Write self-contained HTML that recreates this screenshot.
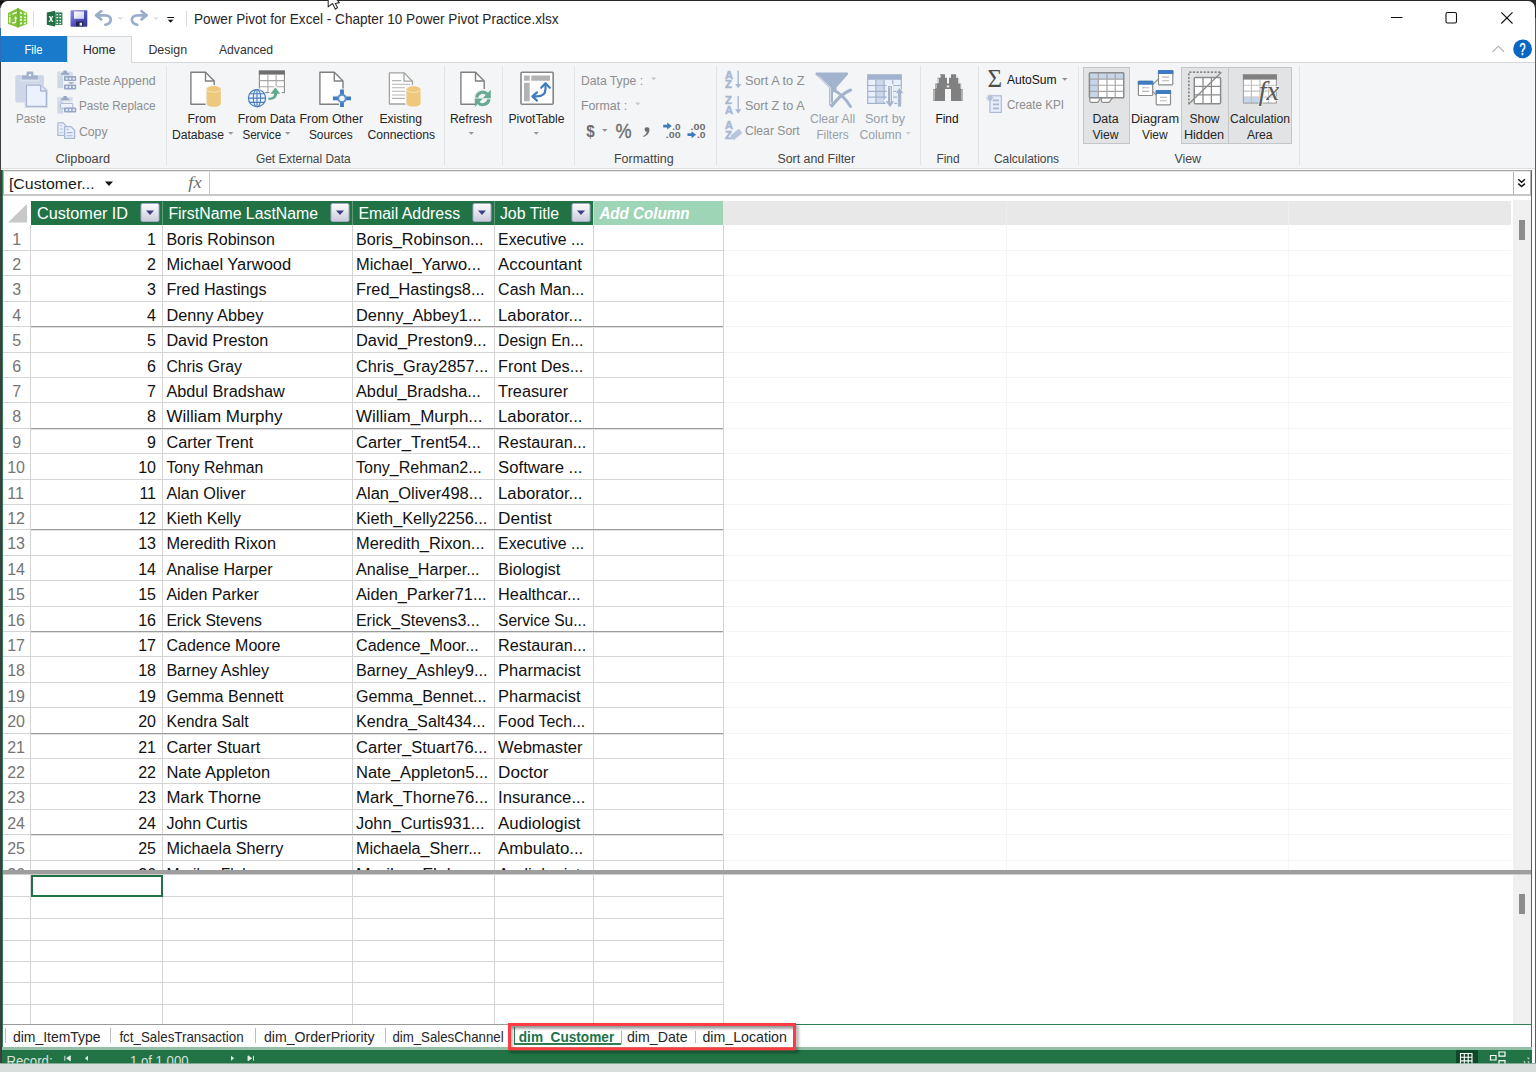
<!DOCTYPE html>
<html lang="en"><head><meta charset="utf-8"><title>Power Pivot for Excel - Chapter 10 Power Pivot Practice.xlsx</title>
<style>
html,body{margin:0;padding:0;background:#fff;}
body{width:1536px;height:1072px;overflow:hidden;position:relative;font-family:"Liberation Sans", sans-serif;}
#win{position:absolute;left:0;top:0;width:1536px;height:1072px;overflow:hidden;}
#win>div{position:absolute;box-sizing:border-box;}
svg#ov{position:absolute;left:0;top:0;}
svg text{font-family:"Liberation Sans", sans-serif;white-space:pre;}
</style></head><body>
<div id="win">
<div style="left:0px;top:0px;width:1536px;height:1072px;background:#26282c;"></div>
<div style="left:0px;top:1px;width:9px;height:9px;background:linear-gradient(135deg,#0c0c0c 0%,#161616 22%,#aab2be 55%,#c5cbd6 100%);"></div>
<div style="left:1px;top:1px;width:1534px;height:1063px;background:#ffffff;border-radius:7px 7px 0 0;"></div>
<div style="left:0px;top:1064px;width:1536px;height:8px;background:#d7dedb;"></div>
<div style="left:1px;top:36px;width:66px;height:26px;background:#1979ca;"></div>
<div style="left:67px;top:36px;width:65px;height:27px;background:#f3f5f7;border:1px solid #d5d7da;border-bottom:none;"></div>
<div style="left:132px;top:62px;width:1403px;height:1px;background:#d5d7da;"></div>
<div style="left:1px;top:63px;width:1534px;height:105px;background:#f3f5f7;"></div>
<div style="left:1px;top:168px;width:1534px;height:1px;background:#dcdee0;"></div>
<div style="left:1px;top:169px;width:1534px;height:2px;background:#ffffff;"></div>
<div style="left:33px;top:11px;width:1px;height:15px;background:#dadada;"></div>
<div style="left:186px;top:11px;width:1px;height:15px;background:#dadada;"></div>
<div style="left:166px;top:66px;width:1px;height:99px;background:#e1e3e5;"></div>
<div style="left:444px;top:66px;width:1px;height:99px;background:#e1e3e5;"></div>
<div style="left:502px;top:66px;width:1px;height:99px;background:#e1e3e5;"></div>
<div style="left:574px;top:66px;width:1px;height:99px;background:#e1e3e5;"></div>
<div style="left:716px;top:66px;width:1px;height:99px;background:#e1e3e5;"></div>
<div style="left:920px;top:66px;width:1px;height:99px;background:#e1e3e5;"></div>
<div style="left:978px;top:66px;width:1px;height:99px;background:#e1e3e5;"></div>
<div style="left:1078px;top:66px;width:1px;height:99px;background:#e1e3e5;"></div>
<div style="left:1299px;top:66px;width:1px;height:99px;background:#e1e3e5;"></div>
<div style="left:1083px;top:67px;width:47px;height:77px;background:#e1e3e4;border:1px solid #c3c5c7;"></div>
<div style="left:1181px;top:67px;width:48px;height:77px;background:#e1e3e4;border:1px solid #c3c5c7;"></div>
<div style="left:1228px;top:67px;width:64px;height:77px;background:#e1e3e4;border:1px solid #c3c5c7;"></div>
<div style="left:3px;top:170px;width:1528px;height:26px;background:#ffffff;border:1px solid #b4b4b4;border-top-color:#a6a6a6;border-bottom:2px solid #c8c8c8;"></div>
<div style="left:4px;top:171px;width:1526px;height:1px;background:#e4e4e4;"></div>
<div style="left:209px;top:172px;width:1px;height:23px;background:#c8c8c8;"></div>
<div style="left:1513px;top:172px;width:1px;height:23px;background:#b5b5b5;"></div>
<div style="left:0px;top:8px;width:1px;height:20px;background:#c5cbd6;"></div>
<div style="left:0px;top:28px;width:1px;height:34px;background:#2b6cb8;"></div>
<div style="left:0px;top:62px;width:1px;height:1001px;background:#3f3f3f;"></div>
<div style="left:1px;top:170px;width:1px;height:893px;background:#3a3a3a;"></div>
<div style="left:2px;top:170px;width:1px;height:880px;background:#2e7d53;"></div>
<div style="left:1531px;top:170px;width:1px;height:893px;background:#2e7d53;"></div>
<div style="left:1535px;top:18px;width:1px;height:1045px;background:#5c5c5c;"></div>
<div style="left:3px;top:201px;width:27px;height:24px;background:#ffffff;"></div>
<div style="left:31px;top:201px;width:562px;height:24px;background:#217346;"></div>
<div style="left:593px;top:201px;width:130px;height:24px;background:#9fd5b7;"></div>
<div style="left:723px;top:201px;width:788px;height:24px;background:#e8e8e8;"></div>
<div style="left:162px;top:201px;width:1px;height:24px;background:#5e9b78;"></div>
<div style="left:352px;top:201px;width:1px;height:24px;background:#5e9b78;"></div>
<div style="left:494px;top:201px;width:1px;height:24px;background:#5e9b78;"></div>
<div style="left:593px;top:201px;width:1px;height:24px;background:#bfe3cf;"></div>
<div style="left:1006px;top:201px;width:1px;height:24px;background:#eeeeee;"></div>
<div style="left:1288px;top:201px;width:1px;height:24px;background:#eeeeee;"></div>
<div style="left:30px;top:225px;width:1px;height:645px;background:#d4d4d4;"></div>
<div style="left:162px;top:225px;width:1px;height:645px;background:#d4d4d4;"></div>
<div style="left:352px;top:225px;width:1px;height:645px;background:#d4d4d4;"></div>
<div style="left:494px;top:225px;width:1px;height:645px;background:#d4d4d4;"></div>
<div style="left:593px;top:225px;width:1px;height:645px;background:#d4d4d4;"></div>
<div style="left:723px;top:225px;width:1px;height:645px;background:#d4d4d4;"></div>
<div style="left:1006px;top:225px;width:1px;height:645px;background:#f5f5f5;"></div>
<div style="left:1288px;top:225px;width:1px;height:645px;background:#f5f5f5;"></div>
<div style="left:3px;top:250px;width:720px;height:1px;background:#d4d4d4;"></div>
<div style="left:724px;top:250px;width:787px;height:1px;background:#f4f4f4;"></div>
<div style="left:3px;top:275px;width:720px;height:1px;background:#d4d4d4;"></div>
<div style="left:724px;top:275px;width:787px;height:1px;background:#f4f4f4;"></div>
<div style="left:3px;top:301px;width:720px;height:1px;background:#d4d4d4;"></div>
<div style="left:724px;top:301px;width:787px;height:1px;background:#f4f4f4;"></div>
<div style="left:3px;top:326px;width:720px;height:1px;background:#d4d4d4;"></div>
<div style="left:724px;top:326px;width:787px;height:1px;background:#f4f4f4;"></div>
<div style="left:31px;top:326px;width:692px;height:1px;background:#9c9c9c;"></div>
<div style="left:31px;top:327px;width:692px;height:1px;background:#e0e0e0;"></div>
<div style="left:3px;top:352px;width:720px;height:1px;background:#d4d4d4;"></div>
<div style="left:724px;top:352px;width:787px;height:1px;background:#f4f4f4;"></div>
<div style="left:3px;top:377px;width:720px;height:1px;background:#d4d4d4;"></div>
<div style="left:724px;top:377px;width:787px;height:1px;background:#f4f4f4;"></div>
<div style="left:3px;top:402px;width:720px;height:1px;background:#d4d4d4;"></div>
<div style="left:724px;top:402px;width:787px;height:1px;background:#f4f4f4;"></div>
<div style="left:3px;top:428px;width:720px;height:1px;background:#d4d4d4;"></div>
<div style="left:724px;top:428px;width:787px;height:1px;background:#f4f4f4;"></div>
<div style="left:31px;top:428px;width:692px;height:1px;background:#9c9c9c;"></div>
<div style="left:31px;top:429px;width:692px;height:1px;background:#e0e0e0;"></div>
<div style="left:3px;top:453px;width:720px;height:1px;background:#d4d4d4;"></div>
<div style="left:724px;top:453px;width:787px;height:1px;background:#f4f4f4;"></div>
<div style="left:3px;top:479px;width:720px;height:1px;background:#d4d4d4;"></div>
<div style="left:724px;top:479px;width:787px;height:1px;background:#f4f4f4;"></div>
<div style="left:3px;top:504px;width:720px;height:1px;background:#d4d4d4;"></div>
<div style="left:724px;top:504px;width:787px;height:1px;background:#f4f4f4;"></div>
<div style="left:3px;top:529px;width:720px;height:1px;background:#d4d4d4;"></div>
<div style="left:724px;top:529px;width:787px;height:1px;background:#f4f4f4;"></div>
<div style="left:31px;top:529px;width:692px;height:1px;background:#9c9c9c;"></div>
<div style="left:31px;top:530px;width:692px;height:1px;background:#e0e0e0;"></div>
<div style="left:3px;top:555px;width:720px;height:1px;background:#d4d4d4;"></div>
<div style="left:724px;top:555px;width:787px;height:1px;background:#f4f4f4;"></div>
<div style="left:3px;top:580px;width:720px;height:1px;background:#d4d4d4;"></div>
<div style="left:724px;top:580px;width:787px;height:1px;background:#f4f4f4;"></div>
<div style="left:3px;top:606px;width:720px;height:1px;background:#d4d4d4;"></div>
<div style="left:724px;top:606px;width:787px;height:1px;background:#f4f4f4;"></div>
<div style="left:3px;top:631px;width:720px;height:1px;background:#d4d4d4;"></div>
<div style="left:724px;top:631px;width:787px;height:1px;background:#f4f4f4;"></div>
<div style="left:31px;top:631px;width:692px;height:1px;background:#9c9c9c;"></div>
<div style="left:31px;top:632px;width:692px;height:1px;background:#e0e0e0;"></div>
<div style="left:3px;top:656px;width:720px;height:1px;background:#d4d4d4;"></div>
<div style="left:724px;top:656px;width:787px;height:1px;background:#f4f4f4;"></div>
<div style="left:3px;top:682px;width:720px;height:1px;background:#d4d4d4;"></div>
<div style="left:724px;top:682px;width:787px;height:1px;background:#f4f4f4;"></div>
<div style="left:3px;top:707px;width:720px;height:1px;background:#d4d4d4;"></div>
<div style="left:724px;top:707px;width:787px;height:1px;background:#f4f4f4;"></div>
<div style="left:3px;top:733px;width:720px;height:1px;background:#d4d4d4;"></div>
<div style="left:724px;top:733px;width:787px;height:1px;background:#f4f4f4;"></div>
<div style="left:31px;top:733px;width:692px;height:1px;background:#9c9c9c;"></div>
<div style="left:31px;top:734px;width:692px;height:1px;background:#e0e0e0;"></div>
<div style="left:3px;top:758px;width:720px;height:1px;background:#d4d4d4;"></div>
<div style="left:724px;top:758px;width:787px;height:1px;background:#f4f4f4;"></div>
<div style="left:3px;top:783px;width:720px;height:1px;background:#d4d4d4;"></div>
<div style="left:724px;top:783px;width:787px;height:1px;background:#f4f4f4;"></div>
<div style="left:3px;top:809px;width:720px;height:1px;background:#d4d4d4;"></div>
<div style="left:724px;top:809px;width:787px;height:1px;background:#f4f4f4;"></div>
<div style="left:3px;top:834px;width:720px;height:1px;background:#d4d4d4;"></div>
<div style="left:724px;top:834px;width:787px;height:1px;background:#f4f4f4;"></div>
<div style="left:31px;top:834px;width:692px;height:1px;background:#9c9c9c;"></div>
<div style="left:31px;top:835px;width:692px;height:1px;background:#e0e0e0;"></div>
<div style="left:3px;top:860px;width:720px;height:1px;background:#d4d4d4;"></div>
<div style="left:724px;top:860px;width:787px;height:1px;background:#f4f4f4;"></div>
<div style="left:1513px;top:200px;width:18px;height:670px;background:#f0f0f0;"></div>
<div style="left:1519px;top:220px;width:6px;height:20px;background:#8c8c8c;"></div>
<div style="left:3px;top:870px;width:1528px;height:4px;background:#9e9e9e;"></div>
<div style="left:3px;top:874px;width:1528px;height:1px;background:#cfcfcf;"></div>
<div style="left:30px;top:875px;width:1px;height:149px;background:#d4d4d4;"></div>
<div style="left:162px;top:875px;width:1px;height:149px;background:#d4d4d4;"></div>
<div style="left:352px;top:875px;width:1px;height:149px;background:#d4d4d4;"></div>
<div style="left:494px;top:875px;width:1px;height:149px;background:#d4d4d4;"></div>
<div style="left:593px;top:875px;width:1px;height:149px;background:#d4d4d4;"></div>
<div style="left:723px;top:875px;width:1px;height:149px;background:#d4d4d4;"></div>
<div style="left:3px;top:896px;width:720px;height:1px;background:#d4d4d4;"></div>
<div style="left:3px;top:918px;width:720px;height:1px;background:#d4d4d4;"></div>
<div style="left:3px;top:940px;width:720px;height:1px;background:#d4d4d4;"></div>
<div style="left:3px;top:961px;width:720px;height:1px;background:#d4d4d4;"></div>
<div style="left:3px;top:982px;width:720px;height:1px;background:#d4d4d4;"></div>
<div style="left:3px;top:1004px;width:720px;height:1px;background:#d4d4d4;"></div>
<div style="left:31px;top:875px;width:132px;height:22px;border:2px solid #217346;"></div>
<div style="left:1513px;top:875px;width:18px;height:149px;background:#f0f0f0;"></div>
<div style="left:1519px;top:894px;width:6px;height:20px;background:#8c8c8c;"></div>
<div style="left:3px;top:1024px;width:1528px;height:1px;background:#9a9a9a;"></div>
<div style="left:796px;top:1024px;width:735px;height:1px;background:#2e7d53;"></div>
<div style="left:5px;top:1028px;width:1px;height:15px;background:#bdbdbd;"></div>
<div style="left:110px;top:1028px;width:1px;height:15px;background:#bdbdbd;"></div>
<div style="left:255px;top:1028px;width:1px;height:15px;background:#bdbdbd;"></div>
<div style="left:385px;top:1028px;width:1px;height:15px;background:#bdbdbd;"></div>
<div style="left:695px;top:1028px;width:1px;height:15px;background:#bdbdbd;"></div>
<div style="left:621px;top:1027px;width:1px;height:17px;background:#a9b8b0;"></div>
<div style="left:511px;top:1026px;width:282px;height:5px;background:linear-gradient(#c9c9c9,#ffffff);"></div>
<div style="left:514px;top:1027px;width:1px;height:17px;background:#2e7d53;"></div>
<div style="left:514px;top:1043px;width:107px;height:1.5px;background:#2e7d53;"></div>
<div style="left:2px;top:1047px;width:1530px;height:3px;background:#93bfa7;"></div>
<div style="left:2px;top:1050px;width:1530px;height:13px;background:#217346;"></div>
<div style="left:0px;top:1063px;width:1536px;height:1px;background:#8fb49f;"></div>
<div style="left:2px;top:1063px;width:1530px;height:1px;background:#7fab93;"></div>
<div style="left:1456px;top:1050px;width:22px;height:13px;background:#0d4926;"></div>
<svg id="ov" width="1536" height="1072" viewBox="0 0 1536 1072">
<text x="193.90" y="23.60" font-size="14" fill="#262626" textLength="364.70" lengthAdjust="spacingAndGlyphs">Power Pivot for Excel - Chapter 10 Power Pivot Practice.xlsx</text>
<text x="24.40" y="53.60" font-size="13" fill="#ffffff" textLength="18.20" lengthAdjust="spacingAndGlyphs">File</text>
<text x="82.90" y="53.60" font-size="13" fill="#262626" textLength="32.70" lengthAdjust="spacingAndGlyphs">Home</text>
<text x="148.40" y="53.60" font-size="13" fill="#333333" textLength="38.70" lengthAdjust="spacingAndGlyphs">Design</text>
<text x="218.90" y="53.60" font-size="13" fill="#333333" textLength="54.20" lengthAdjust="spacingAndGlyphs">Advanced</text>
<text x="55.40" y="163.00" font-size="12.5" fill="#444444" textLength="54.70" lengthAdjust="spacingAndGlyphs">Clipboard</text>
<text x="255.90" y="163.00" font-size="12.5" fill="#444444" textLength="94.70" lengthAdjust="spacingAndGlyphs">Get External Data</text>
<text x="613.90" y="163.00" font-size="12.5" fill="#444444" textLength="59.70" lengthAdjust="spacingAndGlyphs">Formatting</text>
<text x="777.40" y="163.00" font-size="12.5" fill="#444444" textLength="77.70" lengthAdjust="spacingAndGlyphs">Sort and Filter</text>
<text x="936.40" y="163.00" font-size="12.5" fill="#444444" textLength="23.20" lengthAdjust="spacingAndGlyphs">Find</text>
<text x="993.90" y="163.00" font-size="12.5" fill="#444444" textLength="65.20" lengthAdjust="spacingAndGlyphs">Calculations</text>
<text x="1174.40" y="163.00" font-size="12.5" fill="#444444" textLength="26.70" lengthAdjust="spacingAndGlyphs">View</text>
<text x="15.90" y="123.20" font-size="12.5" fill="#8e8e8e" textLength="29.70" lengthAdjust="spacingAndGlyphs">Paste</text>
<text x="78.90" y="85.00" font-size="12.5" fill="#8e8e8e" textLength="76.70" lengthAdjust="spacingAndGlyphs">Paste Append</text>
<text x="78.90" y="110.00" font-size="12.5" fill="#8e8e8e" textLength="76.70" lengthAdjust="spacingAndGlyphs">Paste Replace</text>
<text x="78.90" y="135.60" font-size="12.5" fill="#8e8e8e" textLength="28.70" lengthAdjust="spacingAndGlyphs">Copy</text>
<text x="187.40" y="123.20" font-size="12.5" fill="#262626" textLength="28.70" lengthAdjust="spacingAndGlyphs">From</text>
<text x="171.90" y="139.00" font-size="12.5" fill="#262626" textLength="52.00" lengthAdjust="spacingAndGlyphs">Database</text>
<text x="237.70" y="123.20" font-size="12.5" fill="#262626" textLength="57.90" lengthAdjust="spacingAndGlyphs">From Data</text>
<text x="242.40" y="139.00" font-size="12.5" fill="#262626" textLength="38.70" lengthAdjust="spacingAndGlyphs">Service</text>
<text x="299.40" y="123.20" font-size="12.5" fill="#262626" textLength="63.70" lengthAdjust="spacingAndGlyphs">From Other</text>
<text x="308.90" y="139.00" font-size="12.5" fill="#262626" textLength="43.70" lengthAdjust="spacingAndGlyphs">Sources</text>
<text x="379.40" y="123.20" font-size="12.5" fill="#262626" textLength="42.50" lengthAdjust="spacingAndGlyphs">Existing</text>
<text x="367.40" y="139.00" font-size="12.5" fill="#262626" textLength="67.70" lengthAdjust="spacingAndGlyphs">Connections</text>
<text x="449.90" y="123.20" font-size="12.5" fill="#262626" textLength="42.20" lengthAdjust="spacingAndGlyphs">Refresh</text>
<text x="508.40" y="123.20" font-size="12.5" fill="#262626" textLength="56.20" lengthAdjust="spacingAndGlyphs">PivotTable</text>
<text x="580.90" y="85.00" font-size="12.5" fill="#8e8e8e" textLength="62.20" lengthAdjust="spacingAndGlyphs">Data Type :</text>
<text x="580.90" y="110.00" font-size="12.5" fill="#8e8e8e" textLength="46.20" lengthAdjust="spacingAndGlyphs">Format :</text>
<text x="744.90" y="85.00" font-size="12.5" fill="#8e8e8e" textLength="59.70" lengthAdjust="spacingAndGlyphs">Sort A to Z</text>
<text x="744.90" y="110.00" font-size="12.5" fill="#8e8e8e" textLength="59.70" lengthAdjust="spacingAndGlyphs">Sort Z to A</text>
<text x="744.90" y="135.30" font-size="12.5" fill="#8e8e8e" textLength="54.70" lengthAdjust="spacingAndGlyphs">Clear Sort</text>
<text x="809.90" y="123.20" font-size="12.5" fill="#9aa0a8" textLength="45.20" lengthAdjust="spacingAndGlyphs">Clear All</text>
<text x="816.40" y="139.00" font-size="12.5" fill="#9aa0a8" textLength="32.20" lengthAdjust="spacingAndGlyphs">Filters</text>
<text x="864.90" y="123.20" font-size="12.5" fill="#9aa0a8" textLength="40.20" lengthAdjust="spacingAndGlyphs">Sort by</text>
<text x="859.40" y="139.00" font-size="12.5" fill="#9aa0a8" textLength="42.20" lengthAdjust="spacingAndGlyphs">Column</text>
<text x="935.40" y="123.20" font-size="12.5" fill="#111111" textLength="23.20" lengthAdjust="spacingAndGlyphs">Find</text>
<text x="1006.90" y="84.00" font-size="12.5" fill="#111111" textLength="49.70" lengthAdjust="spacingAndGlyphs">AutoSum</text>
<text x="1006.90" y="108.50" font-size="12.5" fill="#8e8e8e" textLength="57.20" lengthAdjust="spacingAndGlyphs">Create KPI</text>
<text x="1092.40" y="123.20" font-size="12.5" fill="#262626" textLength="26.20" lengthAdjust="spacingAndGlyphs">Data</text>
<text x="1092.40" y="139.00" font-size="12.5" fill="#262626" textLength="26.20" lengthAdjust="spacingAndGlyphs">View</text>
<text x="1130.90" y="123.20" font-size="12.5" fill="#262626" textLength="48.20" lengthAdjust="spacingAndGlyphs">Diagram</text>
<text x="1141.90" y="139.00" font-size="12.5" fill="#262626" textLength="25.70" lengthAdjust="spacingAndGlyphs">View</text>
<text x="1189.40" y="123.20" font-size="12.5" fill="#262626" textLength="30.20" lengthAdjust="spacingAndGlyphs">Show</text>
<text x="1183.90" y="139.00" font-size="12.5" fill="#262626" textLength="40.20" lengthAdjust="spacingAndGlyphs">Hidden</text>
<text x="1229.90" y="123.20" font-size="12.5" fill="#262626" textLength="60.20" lengthAdjust="spacingAndGlyphs">Calculation</text>
<text x="1246.90" y="139.00" font-size="12.5" fill="#262626" textLength="25.70" lengthAdjust="spacingAndGlyphs">Area</text>
<path d="M228 132h5.5l-2.75 2.8z" fill="#9a9a9a"/>
<path d="M285 132h5.5l-2.75 2.8z" fill="#9a9a9a"/>
<path d="M468.5 132h5.5l-2.75 2.8z" fill="#9a9a9a"/>
<path d="M533.5 132h5.5l-2.75 2.8z" fill="#9a9a9a"/>
<path d="M651 77.5h5.5l-2.75 2.8z" fill="#c8c8c8"/>
<path d="M635 102.5h5.5l-2.75 2.8z" fill="#c8c8c8"/>
<path d="M602 129h5.5l-2.75 2.8z" fill="#8e8e8e"/>
<path d="M905.5 132h5.5l-2.75 2.8z" fill="#cfcfcf"/>
<path d="M1062 78h5.5l-2.75 2.8z" fill="#8e8e8e"/>
<path d="M1391 17.5h11.5" stroke="#111" stroke-width="1" fill="none"/>
<rect x="1446" y="12.5" width="10.5" height="10.5" rx="1.5" fill="none" stroke="#111" stroke-width="1.1"/>
<path d="M1501.3 12.3l11.2 11.2M1512.5 12.3l-11.2 11.2" stroke="#111" stroke-width="1.1" fill="none"/>
<path d="M1492.5 51.8l5.8-5.6 5.8 5.6" stroke="#a8a8a8" stroke-width="1.1" fill="none"/>
<circle cx="1522.6" cy="48.9" r="9.4" fill="#0a66c2"/>
<text x="1519.60" y="54.60" font-size="16.5" fill="#ffffff" textLength="6.00" lengthAdjust="spacingAndGlyphs" stroke="#fff" stroke-width="0.5">?</text>
<text x="8.90" y="188.90" font-size="15" fill="#1a1a1a" textLength="85.70" lengthAdjust="spacingAndGlyphs">[Customer...</text>
<path d="M105 181.5h8l-4 4.5z" fill="#111"/>
<text x="188.3" y="187.6" style="font-family:'Liberation Serif',serif" font-style="italic" font-size="17" fill="#707070" textLength="13.4" lengthAdjust="spacingAndGlyphs">fx</text>
<path d="M1518.3 179.3l3.3 3 3.3-3M1518.3 183.6l3.3 3 3.3-3" stroke="#111" stroke-width="1.5" fill="none"/>
<path d="M8 222.5L27 204V222.5z" fill="#c8c8c8"/>
<text x="36.90" y="218.80" font-size="16" fill="#ffffff" textLength="91.20" lengthAdjust="spacingAndGlyphs">Customer ID</text>
<text x="168.40" y="218.80" font-size="16" fill="#ffffff" textLength="149.70" lengthAdjust="spacingAndGlyphs">FirstName LastName</text>
<text x="358.40" y="218.80" font-size="16" fill="#ffffff" textLength="101.70" lengthAdjust="spacingAndGlyphs">Email Address</text>
<text x="499.90" y="218.80" font-size="16" fill="#ffffff" textLength="59.20" lengthAdjust="spacingAndGlyphs">Job Title</text>
<text x="599.40" y="218.80" font-size="16" fill="#ffffff" font-weight="bold" font-style="italic" textLength="90.20" lengthAdjust="spacingAndGlyphs">Add Column</text>
<defs><linearGradient id="fb" x1="0" y1="0" x2="0" y2="1"><stop offset="0" stop-color="#fdfdfd"/><stop offset="1" stop-color="#cbcbda"/></linearGradient></defs>
<rect x="141" y="203.5" width="18" height="18" rx="1.5" fill="url(#fb)" stroke="#a4a8c8" stroke-width="1"/>
<path d="M146 210.5h8l-4 4.5z" fill="#3a3f86"/>
<rect x="331" y="203.5" width="18" height="18" rx="1.5" fill="url(#fb)" stroke="#a4a8c8" stroke-width="1"/>
<path d="M336 210.5h8l-4 4.5z" fill="#3a3f86"/>
<rect x="473" y="203.5" width="18" height="18" rx="1.5" fill="url(#fb)" stroke="#a4a8c8" stroke-width="1"/>
<path d="M478 210.5h8l-4 4.5z" fill="#3a3f86"/>
<rect x="572" y="203.5" width="18" height="18" rx="1.5" fill="url(#fb)" stroke="#a4a8c8" stroke-width="1"/>
<path d="M577 210.5h8l-4 4.5z" fill="#3a3f86"/>
<clipPath id="gc"><rect x="0" y="200" width="1536" height="670"/></clipPath>
<g clip-path="url(#gc)">
<text x="12.2" y="245.1" font-size="16" fill="#757575">1</text>
<text x="156" y="245.1" font-size="16" fill="#111" text-anchor="end">1</text>
<text x="166.40" y="245.10" font-size="16" fill="#111" textLength="108.40" lengthAdjust="spacingAndGlyphs">Boris Robinson</text>
<text x="356.00" y="245.10" font-size="16" fill="#111" textLength="127.60" lengthAdjust="spacingAndGlyphs">Boris_Robinson...</text>
<text x="498.10" y="245.10" font-size="16" fill="#111" textLength="86.10" lengthAdjust="spacingAndGlyphs">Executive ...</text>
<text x="12.2" y="270.1" font-size="16" fill="#757575">2</text>
<text x="156" y="270.1" font-size="16" fill="#111" text-anchor="end">2</text>
<text x="166.40" y="270.10" font-size="16" fill="#111" textLength="124.70" lengthAdjust="spacingAndGlyphs">Michael Yarwood</text>
<text x="356.00" y="270.10" font-size="16" fill="#111" textLength="124.80" lengthAdjust="spacingAndGlyphs">Michael_Yarwo...</text>
<text x="498.10" y="270.10" font-size="16" fill="#111" textLength="83.80" lengthAdjust="spacingAndGlyphs">Accountant</text>
<text x="12.2" y="295.1" font-size="16" fill="#757575">3</text>
<text x="156" y="295.1" font-size="16" fill="#111" text-anchor="end">3</text>
<text x="166.40" y="295.10" font-size="16" fill="#111" textLength="100.10" lengthAdjust="spacingAndGlyphs">Fred Hastings</text>
<text x="356.00" y="295.10" font-size="16" fill="#111" textLength="128.50" lengthAdjust="spacingAndGlyphs">Fred_Hastings8...</text>
<text x="498.10" y="295.10" font-size="16" fill="#111" textLength="86.10" lengthAdjust="spacingAndGlyphs">Cash Man...</text>
<text x="12.2" y="321.1" font-size="16" fill="#757575">4</text>
<text x="156" y="321.1" font-size="16" fill="#111" text-anchor="end">4</text>
<text x="166.40" y="321.10" font-size="16" fill="#111" textLength="96.90" lengthAdjust="spacingAndGlyphs">Denny Abbey</text>
<text x="356.00" y="321.10" font-size="16" fill="#111" textLength="125.60" lengthAdjust="spacingAndGlyphs">Denny_Abbey1...</text>
<text x="498.10" y="321.10" font-size="16" fill="#111" textLength="84.40" lengthAdjust="spacingAndGlyphs">Laborator...</text>
<text x="12.2" y="346.1" font-size="16" fill="#757575">5</text>
<text x="156" y="346.1" font-size="16" fill="#111" text-anchor="end">5</text>
<text x="166.40" y="346.10" font-size="16" fill="#111" textLength="101.80" lengthAdjust="spacingAndGlyphs">David Preston</text>
<text x="356.00" y="346.10" font-size="16" fill="#111" textLength="130.50" lengthAdjust="spacingAndGlyphs">David_Preston9...</text>
<text x="498.10" y="346.10" font-size="16" fill="#111" textLength="85.20" lengthAdjust="spacingAndGlyphs">Design En...</text>
<text x="12.2" y="372.1" font-size="16" fill="#757575">6</text>
<text x="156" y="372.1" font-size="16" fill="#111" text-anchor="end">6</text>
<text x="166.40" y="372.10" font-size="16" fill="#111" textLength="75.50" lengthAdjust="spacingAndGlyphs">Chris Gray</text>
<text x="356.00" y="372.10" font-size="16" fill="#111" textLength="132.20" lengthAdjust="spacingAndGlyphs">Chris_Gray2857...</text>
<text x="498.10" y="372.10" font-size="16" fill="#111" textLength="85.20" lengthAdjust="spacingAndGlyphs">Front Des...</text>
<text x="12.2" y="397.1" font-size="16" fill="#757575">7</text>
<text x="156" y="397.1" font-size="16" fill="#111" text-anchor="end">7</text>
<text x="166.40" y="397.10" font-size="16" fill="#111" textLength="118.40" lengthAdjust="spacingAndGlyphs">Abdul Bradshaw</text>
<text x="356.00" y="397.10" font-size="16" fill="#111" textLength="124.80" lengthAdjust="spacingAndGlyphs">Abdul_Bradsha...</text>
<text x="498.10" y="397.10" font-size="16" fill="#111" textLength="70.00" lengthAdjust="spacingAndGlyphs">Treasurer</text>
<text x="12.2" y="422.1" font-size="16" fill="#757575">8</text>
<text x="156" y="422.1" font-size="16" fill="#111" text-anchor="end">8</text>
<text x="166.40" y="422.10" font-size="16" fill="#111" textLength="116.10" lengthAdjust="spacingAndGlyphs">William Murphy</text>
<text x="356.00" y="422.10" font-size="16" fill="#111" textLength="126.50" lengthAdjust="spacingAndGlyphs">William_Murph...</text>
<text x="498.10" y="422.10" font-size="16" fill="#111" textLength="84.40" lengthAdjust="spacingAndGlyphs">Laborator...</text>
<text x="12.2" y="448.1" font-size="16" fill="#757575">9</text>
<text x="156" y="448.1" font-size="16" fill="#111" text-anchor="end">9</text>
<text x="166.40" y="448.10" font-size="16" fill="#111" textLength="86.90" lengthAdjust="spacingAndGlyphs">Carter Trent</text>
<text x="356.00" y="448.10" font-size="16" fill="#111" textLength="124.80" lengthAdjust="spacingAndGlyphs">Carter_Trent54...</text>
<text x="498.10" y="448.10" font-size="16" fill="#111" textLength="88.10" lengthAdjust="spacingAndGlyphs">Restauran...</text>
<text x="7.2" y="473.1" font-size="16" fill="#757575">10</text>
<text x="156" y="473.1" font-size="16" fill="#111" text-anchor="end">10</text>
<text x="166.40" y="473.10" font-size="16" fill="#111" textLength="96.90" lengthAdjust="spacingAndGlyphs">Tony Rehman</text>
<text x="356.00" y="473.10" font-size="16" fill="#111" textLength="125.60" lengthAdjust="spacingAndGlyphs">Tony_Rehman2...</text>
<text x="498.10" y="473.10" font-size="16" fill="#111" textLength="84.40" lengthAdjust="spacingAndGlyphs">Software ...</text>
<text x="7.2" y="499.1" font-size="16" fill="#757575">11</text>
<text x="156" y="499.1" font-size="16" fill="#111" text-anchor="end">11</text>
<text x="166.40" y="499.10" font-size="16" fill="#111" textLength="79.20" lengthAdjust="spacingAndGlyphs">Alan Oliver</text>
<text x="356.00" y="499.10" font-size="16" fill="#111" textLength="126.50" lengthAdjust="spacingAndGlyphs">Alan_Oliver498...</text>
<text x="498.10" y="499.10" font-size="16" fill="#111" textLength="84.40" lengthAdjust="spacingAndGlyphs">Laborator...</text>
<text x="7.2" y="524.1" font-size="16" fill="#757575">12</text>
<text x="156" y="524.1" font-size="16" fill="#111" text-anchor="end">12</text>
<text x="166.40" y="524.10" font-size="16" fill="#111" textLength="74.60" lengthAdjust="spacingAndGlyphs">Kieth Kelly</text>
<text x="356.00" y="524.10" font-size="16" fill="#111" textLength="131.40" lengthAdjust="spacingAndGlyphs">Kieth_Kelly2256...</text>
<text x="498.10" y="524.10" font-size="16" fill="#111" textLength="53.70" lengthAdjust="spacingAndGlyphs">Dentist</text>
<text x="7.2" y="549.1" font-size="16" fill="#757575">13</text>
<text x="156" y="549.1" font-size="16" fill="#111" text-anchor="end">13</text>
<text x="166.40" y="549.10" font-size="16" fill="#111" textLength="109.60" lengthAdjust="spacingAndGlyphs">Meredith Rixon</text>
<text x="356.00" y="549.10" font-size="16" fill="#111" textLength="128.50" lengthAdjust="spacingAndGlyphs">Meredith_Rixon...</text>
<text x="498.10" y="549.10" font-size="16" fill="#111" textLength="86.10" lengthAdjust="spacingAndGlyphs">Executive ...</text>
<text x="7.2" y="575.1" font-size="16" fill="#757575">14</text>
<text x="156" y="575.1" font-size="16" fill="#111" text-anchor="end">14</text>
<text x="166.40" y="575.10" font-size="16" fill="#111" textLength="106.10" lengthAdjust="spacingAndGlyphs">Analise Harper</text>
<text x="356.00" y="575.10" font-size="16" fill="#111" textLength="123.60" lengthAdjust="spacingAndGlyphs">Analise_Harper...</text>
<text x="498.10" y="575.10" font-size="16" fill="#111" textLength="62.30" lengthAdjust="spacingAndGlyphs">Biologist</text>
<text x="7.2" y="600.1" font-size="16" fill="#757575">15</text>
<text x="156" y="600.1" font-size="16" fill="#111" text-anchor="end">15</text>
<text x="166.40" y="600.10" font-size="16" fill="#111" textLength="92.40" lengthAdjust="spacingAndGlyphs">Aiden Parker</text>
<text x="356.00" y="600.10" font-size="16" fill="#111" textLength="130.50" lengthAdjust="spacingAndGlyphs">Aiden_Parker71...</text>
<text x="498.10" y="600.10" font-size="16" fill="#111" textLength="82.40" lengthAdjust="spacingAndGlyphs">Healthcar...</text>
<text x="7.2" y="626.1" font-size="16" fill="#757575">16</text>
<text x="156" y="626.1" font-size="16" fill="#111" text-anchor="end">16</text>
<text x="166.40" y="626.10" font-size="16" fill="#111" textLength="95.50" lengthAdjust="spacingAndGlyphs">Erick Stevens</text>
<text x="356.00" y="626.10" font-size="16" fill="#111" textLength="123.60" lengthAdjust="spacingAndGlyphs">Erick_Stevens3...</text>
<text x="498.10" y="626.10" font-size="16" fill="#111" textLength="88.10" lengthAdjust="spacingAndGlyphs">Service Su...</text>
<text x="7.2" y="651.1" font-size="16" fill="#757575">17</text>
<text x="156" y="651.1" font-size="16" fill="#111" text-anchor="end">17</text>
<text x="166.40" y="651.10" font-size="16" fill="#111" textLength="114.10" lengthAdjust="spacingAndGlyphs">Cadence Moore</text>
<text x="356.00" y="651.10" font-size="16" fill="#111" textLength="122.80" lengthAdjust="spacingAndGlyphs">Cadence_Moor...</text>
<text x="498.10" y="651.10" font-size="16" fill="#111" textLength="88.10" lengthAdjust="spacingAndGlyphs">Restauran...</text>
<text x="7.2" y="676.1" font-size="16" fill="#757575">18</text>
<text x="156" y="676.1" font-size="16" fill="#111" text-anchor="end">18</text>
<text x="166.40" y="676.10" font-size="16" fill="#111" textLength="102.70" lengthAdjust="spacingAndGlyphs">Barney Ashley</text>
<text x="356.00" y="676.10" font-size="16" fill="#111" textLength="131.40" lengthAdjust="spacingAndGlyphs">Barney_Ashley9...</text>
<text x="498.10" y="676.10" font-size="16" fill="#111" textLength="82.40" lengthAdjust="spacingAndGlyphs">Pharmacist</text>
<text x="7.2" y="702.1" font-size="16" fill="#757575">19</text>
<text x="156" y="702.1" font-size="16" fill="#111" text-anchor="end">19</text>
<text x="166.40" y="702.10" font-size="16" fill="#111" textLength="117.00" lengthAdjust="spacingAndGlyphs">Gemma Bennett</text>
<text x="356.00" y="702.10" font-size="16" fill="#111" textLength="130.50" lengthAdjust="spacingAndGlyphs">Gemma_Bennet...</text>
<text x="498.10" y="702.10" font-size="16" fill="#111" textLength="82.40" lengthAdjust="spacingAndGlyphs">Pharmacist</text>
<text x="7.2" y="727.1" font-size="16" fill="#757575">20</text>
<text x="156" y="727.1" font-size="16" fill="#111" text-anchor="end">20</text>
<text x="166.40" y="727.10" font-size="16" fill="#111" textLength="82.30" lengthAdjust="spacingAndGlyphs">Kendra Salt</text>
<text x="356.00" y="727.10" font-size="16" fill="#111" textLength="129.40" lengthAdjust="spacingAndGlyphs">Kendra_Salt434...</text>
<text x="498.10" y="727.10" font-size="16" fill="#111" textLength="87.20" lengthAdjust="spacingAndGlyphs">Food Tech...</text>
<text x="7.2" y="753.1" font-size="16" fill="#757575">21</text>
<text x="156" y="753.1" font-size="16" fill="#111" text-anchor="end">21</text>
<text x="166.40" y="753.10" font-size="16" fill="#111" textLength="93.80" lengthAdjust="spacingAndGlyphs">Carter Stuart</text>
<text x="356.00" y="753.10" font-size="16" fill="#111" textLength="131.40" lengthAdjust="spacingAndGlyphs">Carter_Stuart76...</text>
<text x="498.10" y="753.10" font-size="16" fill="#111" textLength="84.40" lengthAdjust="spacingAndGlyphs">Webmaster</text>
<text x="7.2" y="778.1" font-size="16" fill="#757575">22</text>
<text x="156" y="778.1" font-size="16" fill="#111" text-anchor="end">22</text>
<text x="166.40" y="778.10" font-size="16" fill="#111" textLength="103.80" lengthAdjust="spacingAndGlyphs">Nate Appleton</text>
<text x="356.00" y="778.10" font-size="16" fill="#111" textLength="132.20" lengthAdjust="spacingAndGlyphs">Nate_Appleton5...</text>
<text x="498.10" y="778.10" font-size="16" fill="#111" textLength="50.30" lengthAdjust="spacingAndGlyphs">Doctor</text>
<text x="7.2" y="803.1" font-size="16" fill="#757575">23</text>
<text x="156" y="803.1" font-size="16" fill="#111" text-anchor="end">23</text>
<text x="166.40" y="803.10" font-size="16" fill="#111" textLength="94.70" lengthAdjust="spacingAndGlyphs">Mark Thorne</text>
<text x="356.00" y="803.10" font-size="16" fill="#111" textLength="132.20" lengthAdjust="spacingAndGlyphs">Mark_Thorne76...</text>
<text x="498.10" y="803.10" font-size="16" fill="#111" textLength="87.20" lengthAdjust="spacingAndGlyphs">Insurance...</text>
<text x="7.2" y="829.1" font-size="16" fill="#757575">24</text>
<text x="156" y="829.1" font-size="16" fill="#111" text-anchor="end">24</text>
<text x="166.40" y="829.10" font-size="16" fill="#111" textLength="81.20" lengthAdjust="spacingAndGlyphs">John Curtis</text>
<text x="356.00" y="829.10" font-size="16" fill="#111" textLength="128.50" lengthAdjust="spacingAndGlyphs">John_Curtis931...</text>
<text x="498.10" y="829.10" font-size="16" fill="#111" textLength="82.40" lengthAdjust="spacingAndGlyphs">Audiologist</text>
<text x="7.2" y="854.1" font-size="16" fill="#757575">25</text>
<text x="156" y="854.1" font-size="16" fill="#111" text-anchor="end">25</text>
<text x="166.40" y="854.10" font-size="16" fill="#111" textLength="117.00" lengthAdjust="spacingAndGlyphs">Michaela Sherry</text>
<text x="356.00" y="854.10" font-size="16" fill="#111" textLength="125.60" lengthAdjust="spacingAndGlyphs">Michaela_Sherr...</text>
<text x="498.10" y="854.10" font-size="16" fill="#111" textLength="85.20" lengthAdjust="spacingAndGlyphs">Ambulato...</text>
<text x="7.2" y="880.1" font-size="16" fill="#757575">26</text>
<text x="156" y="880.1" font-size="16" fill="#111" text-anchor="end">26</text>
<text x="166.40" y="880.10" font-size="16" fill="#111" textLength="91.40" lengthAdjust="spacingAndGlyphs">Marilyn Flaks</text>
<text x="356.00" y="880.10" font-size="16" fill="#111" textLength="122.80" lengthAdjust="spacingAndGlyphs">Marilyn_Flaks...</text>
<text x="498.10" y="880.10" font-size="16" fill="#111" textLength="82.40" lengthAdjust="spacingAndGlyphs">Audiologist</text>
</g>
<text x="12.90" y="1041.70" font-size="14.5" fill="#262626" textLength="87.70" lengthAdjust="spacingAndGlyphs">dim_ItemType</text>
<text x="119.40" y="1041.70" font-size="14.5" fill="#262626" textLength="124.20" lengthAdjust="spacingAndGlyphs">fct_SalesTransaction</text>
<text x="263.90" y="1041.70" font-size="14.5" fill="#262626" textLength="110.70" lengthAdjust="spacingAndGlyphs">dim_OrderPriority</text>
<text x="392.40" y="1041.70" font-size="14.5" fill="#262626" textLength="111.20" lengthAdjust="spacingAndGlyphs">dim_SalesChannel</text>
<text x="518.80" y="1041.70" font-size="14.5" fill="#217346" font-weight="bold" textLength="95.40" lengthAdjust="spacingAndGlyphs">dim_Customer</text>
<text x="627.00" y="1041.70" font-size="14.5" fill="#262626" textLength="60.60" lengthAdjust="spacingAndGlyphs">dim_Date</text>
<text x="702.40" y="1041.70" font-size="14.5" fill="#262626" textLength="84.50" lengthAdjust="spacingAndGlyphs">dim_Location</text>
<clipPath id="sc"><rect x="0" y="1050" width="1536" height="13.5"/></clipPath>
<g clip-path="url(#sc)">
<path d="M1460.5 1053.5h11.500v11h-11.500zM1464.300 1053.500v11M1468.200 1053.500v11M1460.500 1057.200h11.500M1460.500 1060.900h11.500" fill="none" stroke="#fff" stroke-width="1.100"/>
<path d="M1490.500 1055.500h5.500v4.500h-5.500zM1499 1052h6v4.200h-6zM1499 1060.600h6v4h-6z" fill="none" stroke="#fff" stroke-width="1.200"/>
<path d="M1524 1061l1.200 2.500M1527.500 1057.500l1.800 1.500M1528 1061l1.200 2.500" stroke="#b9cfc2" stroke-width="1.200"/>
<text x="6.40" y="1066.00" font-size="14" fill="#d6e2db" textLength="46.20" lengthAdjust="spacingAndGlyphs">Record:</text>
<text x="129.90" y="1066.00" font-size="14" fill="#d6e2db" textLength="58.70" lengthAdjust="spacingAndGlyphs">1 of 1,000</text>
<path d="M64.800 1055.800v5M70.300 1055.800v5l-3.600-2.500z" fill="#e6efe9" stroke="#e6efe9" stroke-width="0.900"/>
<path d="M88 1055.800v5l-3.200-2.500z" fill="#e6efe9"/>
<path d="M231 1055.800v5l3.200-2.500z" fill="#e6efe9"/>
<path d="M248 1055.800v5l3.600-2.500zM253.500 1055.800v5" fill="#e6efe9" stroke="#e6efe9" stroke-width="0.900"/>
</g>
<defs><filter id="sh" x="-5%" y="-30%" width="110%" height="170%"><feGaussianBlur stdDeviation="1.600"/></filter></defs>
<rect x="511" y="1026.500" width="286" height="25" fill="none" stroke="#000" stroke-opacity="0.350" stroke-width="3" filter="url(#sh)"/>
<rect x="509.500" y="1024.500" width="285" height="24.300" fill="none" stroke="#fb3d43" stroke-width="3"/>
<g>
<path d="M18 8L27.3 13.100V24L18 27.500L8 24V13.100z" fill="#82c53c"/>
<path d="M17.200 8.400L18 8l.8.400V27.200L18 27.500l-.8-.300z" fill="#6db530"/>
<path d="M20 11.9L22 12.450000000000001V14.075000000000001L20 13.75z" fill="#fff"/>
<path d="M23.900 12.950000000000001L26 13.6V14.9L23.900 14.475z" fill="#fff"/>
<path d="M20 16.2L22 16.2V17.7L20 17.8z" fill="#fff"/>
<path d="M23.900 16.7L26 16.8V18.1L23.900 18.099999999999998z" fill="#fff"/>
<path d="M20 19.2L22 18.900000000000002V20.45L20 20.8z" fill="#fff"/>
<path d="M23.900 19.400000000000002L26 19.2V20.6L23.900 20.849999999999998z" fill="#fff"/>
<path d="M20 23.1L22 22.35V23.849999999999998L20 24.7z" fill="#fff"/>
<path d="M23.900 22.85L26 22.2V23.5L23.900 24.249999999999996z" fill="#fff"/>
<path d="M12.200 13.400L16.900 11.400V13.100L12.200 14.800z" fill="#fff"/>
<path d="M9.100 16.900h1.400v5.900H9.100zM9 14.600h1.400v1.100H9z" fill="#f2fae8"/>
<path d="M15.600 16.200l1.700 2.600h-1.100v2.700c0 1.200-.8 1.900-2 1.900h-2v-1.300h1.700c.700 0 1-.300 1-1v-2.300h-1z" fill="#fff"/>
</g>
<path d="M46.8 12.5L55.2 10.7V26.6L46.8 24.8z" fill="#1f7144"/>
<rect x="55.2" y="12.4" width="7.2" height="12.6" fill="#2b8050"/>
<rect x="56.4" y="14.0" width="1.7" height="1.4" fill="#fff"/><rect x="59.4" y="14.0" width="1.7" height="1.4" fill="#fff"/>
<rect x="56.4" y="16.9" width="1.7" height="1.4" fill="#fff"/><rect x="59.4" y="16.9" width="1.7" height="1.4" fill="#fff"/>
<rect x="56.4" y="19.9" width="1.7" height="1.4" fill="#fff"/><rect x="59.4" y="19.9" width="1.7" height="1.4" fill="#fff"/>
<rect x="56.4" y="22.8" width="1.7" height="1.4" fill="#fff"/><rect x="59.4" y="22.8" width="1.7" height="1.4" fill="#fff"/>
<path d="M48.7 16l1.5 0 .9 1.9 .9-1.9h1.4l-1.6 3 1.7 3.1h-1.5l-1-2-1 2h-1.4l1.7-3.1z" fill="#fff"/>
<defs><linearGradient id="sv" x1="0" y1="0" x2="1" y2="1"><stop offset="0" stop-color="#9292e6"/><stop offset="0.55" stop-color="#4d4dbb"/><stop offset="1" stop-color="#34349a"/></linearGradient><linearGradient id="sv2" x1="0" y1="0" x2="1" y2="1"><stop offset="0" stop-color="#ffffff"/><stop offset="1" stop-color="#c9cff0"/></linearGradient></defs>
<rect x="70.5" y="10.3" width="16.8" height="16.5" rx="1" fill="url(#sv)"/>
<rect x="74" y="11.4" width="10" height="7.4" fill="url(#sv2)"/>
<rect x="76" y="21.5" width="7.3" height="4.8" fill="#26264d"/>
<rect x="79.6" y="22.7" width="2.4" height="2.9" fill="#e8e8f4"/>
<path d="M101.2 11.2L96 15.3L101.2 19.4M96.3 15.3H105.3C109 15.3 111 17.4 110.8 19.9C110.6 22.4 108.6 24.2 105.4 24.8" fill="none" stroke="#9aaecb" stroke-width="2.7" stroke-linecap="round" stroke-linejoin="round"/>
<path d="M141.5 11.2L146.7 15.3L141.5 19.4M146.4 15.3H137.4C133.7 15.3 131.7 17.4 131.9 19.9C132.1 22.4 134.1 24.2 137.3 24.8" fill="none" stroke="#9aaecb" stroke-width="2.7" stroke-linecap="round" stroke-linejoin="round"/>
<path d="M117.6 17.2h5.4l-2.7 2.8z" fill="#dcdcdc"/>
<path d="M153.3 17.2h5.4l-2.7 2.8z" fill="#dcdcdc"/>
<path d="M167.3 17h6.6v1h-6.6zM167.8 19.7h5.6l-2.8 3.1z" fill="#111"/>
<path d="M328.2 -1V6.9L332.5 3.5L335.400 9.300L337.500 7.600L335.300 3.500L339.400 2.600L336.200 -1z" fill="#fff" stroke="#333" stroke-width="1.100" stroke-linejoin="round"/>
<rect x="15.3" y="75.1" width="28.6" height="27.5" rx="2.2" fill="#cdd7e7"/>
<rect x="20.6" y="79.4" width="18.8" height="2.2" fill="#dde3ee"/>
<path d="M22 79.6V76.6c0-.8.5-1.2 1.2-1.2h3.3v-2.2c0-1 .6-1.6 1.6-1.6h3.8c1 0 1.6.6 1.6 1.6v2.2h3.3c.7 0 1.2.4 1.2 1.2v3z" fill="#a3b1cc"/>
<rect x="28.9" y="74.1" width="2.2" height="2" fill="#f3f5f7"/>
<path d="M24.6 83.4H41.5L48 90V108H24.6z" fill="#d6dde9"/>
<path d="M26.4 85.2H40.6L46.3 91V106.4H26.4z" fill="#ecf2fd" stroke="#a9b7d2" stroke-width="1.3" stroke-linejoin="round"/>
<path d="M40.6 85.2V91H46.3" fill="#dfe7f5" stroke="#a9b7d2" stroke-width="1.3" stroke-linejoin="round"/>
<rect x="57.4" y="71.7" width="5.8" height="16.4" fill="#cdd7e7"/>
<rect x="57.4" y="71.7" width="15.4" height="4.2" fill="#d6deeb"/>
<path d="M61 74.8v-1.6l2.3-.6v-1.2c0-.7.4-1 1-1h1.6c.6 0 1 .3 1 1v1.2l2.3.6v1.6z" fill="#98a7c4"/>
<rect x="64" y="76.1" width="12.2" height="5" rx="0.8" fill="#98a7c4"/>
<rect x="65.8" y="77.69999999999999" width="1.9" height="1.9" fill="#eef3fc"/>
<rect x="69.2" y="77.69999999999999" width="1.9" height="1.9" fill="#eef3fc"/>
<rect x="72.8" y="77.69999999999999" width="1.9" height="1.9" fill="#eef3fc"/>
<rect x="64" y="84.4" width="12.2" height="5" rx="0.8" fill="#98a7c4"/>
<rect x="65.8" y="86.0" width="1.9" height="1.9" fill="#eef3fc"/>
<rect x="69.2" y="86.0" width="1.9" height="1.9" fill="#eef3fc"/>
<rect x="72.8" y="86.0" width="1.9" height="1.9" fill="#eef3fc"/>
<path d="M67.6 82h7.2l-3.6 2.6z" fill="#a9b6cf"/>
<rect x="57.4" y="97.2" width="5.8" height="16.4" fill="#cdd7e7"/>
<rect x="57.4" y="97.2" width="15.4" height="4.2" fill="#d6deeb"/>
<path d="M61 100.3v-1.6l2.3-.6v-1.2c0-.7.4-1 1-1h1.6c.6 0 1 .3 1 1v1.2l2.3.6v1.6z" fill="#98a7c4"/>
<rect x="60.6" y="103.4" width="12.2" height="4.8" rx="0.8" fill="#eef3fc" stroke="#a9b7d2" stroke-width="1"/>
<rect x="64" y="107.4" width="12.2" height="5" rx="0.8" fill="#98a7c4"/>
<rect x="65.8" y="109.0" width="1.9" height="1.9" fill="#eef3fc"/>
<rect x="69.2" y="109.0" width="1.9" height="1.9" fill="#eef3fc"/>
<rect x="72.8" y="109.0" width="1.9" height="1.9" fill="#eef3fc"/>
<path d="M57.9 122.8H63.2L65.8 125.4V135.4H57.9z" fill="#eaf0fb" stroke="#a9b7d2" stroke-width="1.2" stroke-linejoin="round"/>
<path d="M59.6 125.6h2.4M59.6 129h3.6M59.6 132.4h3.6" stroke="#b7c3da" stroke-width="1"/>
<path d="M64.6 126.6H71L74.6 130.2V138.4H64.6z" fill="#eaf0fb" stroke="#a9b7d2" stroke-width="1.3" stroke-linejoin="round"/>
<path d="M66.6 129.4h2M66.6 132.6h6M66.6 135.8h6" stroke="#a9b7d2" stroke-width="1.1"/>
<path d="M190.9 72.3H205.5L214.2 81.0V104.2H190.9z" fill="#fff" stroke="#7f7f7f" stroke-width="1.4" stroke-linejoin="round"/>
<path d="M205.5 72.3V81.0H214.2" fill="none" stroke="#7f7f7f" stroke-width="1.4" stroke-linejoin="round"/>
<path d="M205.4 89.0A8.300000000000008 4.1 0 0 1 222.0 89.0V103.89999999999999A8.300000000000008 4.1 0 0 1 205.4 103.89999999999999z" fill="#f3f5f7"/>
<path d="M206.6 89.0A7.1000000000000085 2.9 0 0 1 220.8 89.0V103.89999999999999A7.1000000000000085 2.9 0 0 1 206.6 103.89999999999999z" fill="#eec87d"/>
<path d="M206.6 89.3A7.1000000000000085 2.9 0 0 0 220.8 89.3" fill="none" stroke="#f8e6c0" stroke-width="1"/>
<rect x="259.4" y="71" width="25" height="21.6" fill="#fff" stroke="#8a8a8a" stroke-width="1.1"/>
<rect x="258.9" y="70.6" width="26" height="4" fill="#6f6f6f"/>
<path d="M267.9 74.6V92.6M276.1 74.6V92.6M259.4 80.6H284.4M259.4 86.7H284.4" stroke="#a8a8a8" stroke-width="1.1" fill="none"/>
<circle cx="257" cy="98.1" r="10.2" fill="#f3f5f7"/>
<circle cx="257" cy="98.1" r="8.6" fill="#eef4fc" stroke="#4a7ebb" stroke-width="1.2"/>
<ellipse cx="257" cy="98.1" rx="3.7" ry="8.6" fill="none" stroke="#4a7ebb" stroke-width="1.1"/>
<path d="M257 89.5V106.7M248.4 98.1H265.6M249.6 93.8H264.4M249.6 102.4H264.4" stroke="#4a7ebb" stroke-width="1.1" fill="none"/>
<path d="M275.3 86.2l6.4 7.6h-3.6c-.2 4-3 6.8-9.6 6.8l-1-3.4c4.4.2 6.2-1 6.4-3.4h-4.4z" fill="#f3f5f7" stroke="#f3f5f7" stroke-width="1.6"/>
<path d="M275.3 87.4l4.9 6.3h-3c-.2 3.6-2.6 6.2-8.6 6.2l-.4-2.2c4 .1 5.8-1.300 6-4h-3.6z" fill="#62a88d"/>
<path d="M319.9 72.3H334.3L343 81.0V104.2H319.9z" fill="#fff" stroke="#7f7f7f" stroke-width="1.4" stroke-linejoin="round"/>
<path d="M334.3 72.3V81.0H343" fill="none" stroke="#7f7f7f" stroke-width="1.4" stroke-linejoin="round"/>
<path d="M339 88.4h6V95.6h7V101.2h-7V108h-6V101.200h-7V95.6h7z" fill="#f3f5f7"/>
<path d="M340.1 89.400h3.800v17.600h-3.800zM333 96.500h18v3.800h-18z" fill="#3f7bbf"/>
<circle cx="342" cy="98.4" r="4.700" fill="#5a90cc"/>
<circle cx="342" cy="98.4" r="2.700" fill="#f4f7fb"/>
<path d="M389.4 72.8H404.0L412.4 81.2V104H389.4z" fill="#fff" stroke="#a3a3a3" stroke-width="1.3" stroke-linejoin="round"/>
<path d="M404.0 72.8V81.2H412.4" fill="none" stroke="#a3a3a3" stroke-width="1.3" stroke-linejoin="round"/>
<path d="M392 80.600h9.400M392 84.300h18M392 87.800h13M392 91.300h13M392 95h13M392 98.400h13" stroke="#b5b5b5" stroke-width="1.100" fill="none"/>
<path d="M405.3 89.2A8.2 4.1 0 0 1 421.7 89.2V103.69999999999999A8.2 4.1 0 0 1 405.3 103.69999999999999z" fill="#f3f5f7"/>
<path d="M406.5 89.2A7.0 2.9 0 0 1 420.5 89.2V103.69999999999999A7.0 2.9 0 0 1 406.5 103.69999999999999z" fill="#eec87d"/>
<path d="M406.5 89.5A7.0 2.9 0 0 0 420.5 89.5" fill="none" stroke="#f8e6c0" stroke-width="1"/>
<path d="M460.9 72.3H475.5L484.2 81.0V104.2H460.9z" fill="#fff" stroke="#7f7f7f" stroke-width="1.4" stroke-linejoin="round"/>
<path d="M475.5 72.3V81.0H484.2" fill="none" stroke="#7f7f7f" stroke-width="1.4" stroke-linejoin="round"/>
<circle cx="482.8" cy="98.4" r="9.600" fill="#f3f5f7"/>
<path d="M476.600 97.6A6.300 6.300 0 0 1 487.400 94.100" fill="none" stroke="#6aaa93" stroke-width="3.100"/>
<path d="M489 99.200A6.300 6.300 0 0 1 478.200 102.700" fill="none" stroke="#6aaa93" stroke-width="3.100"/>
<path d="M490.800 89.800V98.200H482.600z" fill="#6aaa93"/>
<path d="M474.800 107V98.600H483z" fill="#6aaa93"/>
<rect x="521" y="72.200" width="32.200" height="32" rx="1" fill="#fff" stroke="#858585" stroke-width="1.600"/>
<path d="M524 75.600h5.700v5.200H524zM531.300 75.600H550v5.200h-18.700zM524 82.800h5.700v18.500H524z" fill="#b3b3b3"/>
<path d="M545.500 84.500V89C545.500 94 542 96.400 536.500 96.400H533.500" fill="none" stroke="#3f7bbf" stroke-width="2.200"/>
<path d="M541.200 87.800L545.500 83.200L549.800 87.800M537 92.400L532.400 96.400L537 100.600" fill="none" stroke="#3f7bbf" stroke-width="2.200" stroke-linecap="round" stroke-linejoin="round"/>
<text x="586.20" y="137.00" font-size="17" fill="#6e6e6e" font-weight="bold" textLength="8.40" lengthAdjust="spacingAndGlyphs">$</text>
<text x="615.50" y="137.80" font-size="20" fill="#6e6e6e" textLength="16.10" lengthAdjust="spacingAndGlyphs" stroke="#6e6e6e" stroke-width="0.35">%</text>
<path d="M646.800 127.200a2.400 2.400 0 0 1 2.600 2.600c0 3.400-2.400 6-5.800 7.300l-.5-1c2.300-1.100 3.500-2.500 3.700-4.300a2.300 2.300 0 0 1 0-4.600z" fill="#6e6e6e"/>
<path d="M663.2 124.7h4V122.6l4.600 3.500-4.600 3.500V127.5H663.2z" fill="#3f7bbf"/>
<text x="672.30" y="129.70" font-size="9.3" fill="#6e6e6e" font-weight="bold" textLength="8.40" lengthAdjust="spacingAndGlyphs">.0</text>
<text x="665.80" y="137.80" font-size="9.3" fill="#6e6e6e" font-weight="bold" textLength="14.90" lengthAdjust="spacingAndGlyphs">.00</text>
<text x="690.60" y="129.70" font-size="9.3" fill="#6e6e6e" font-weight="bold" textLength="15.00" lengthAdjust="spacingAndGlyphs">.00</text>
<path d="M687.5 133.3h4V131.20000000000002l4.600 3.500-4.600 3.500V136.1H687.5z" fill="#3f7bbf"/>
<text x="697.00" y="137.80" font-size="9.3" fill="#6e6e6e" font-weight="bold" textLength="8.60" lengthAdjust="spacingAndGlyphs">.0</text>
<text x="725.00" y="78.60" font-size="11" fill="#a9b7d2" font-weight="bold" textLength="8.00" lengthAdjust="spacingAndGlyphs" stroke="#a9b7d2" stroke-width="0.5">A</text>
<text x="725.00" y="88.20" font-size="11" fill="#a9b7d2" font-weight="bold" textLength="6.90" lengthAdjust="spacingAndGlyphs" stroke="#a9b7d2" stroke-width="0.5">Z</text>
<path d="M737.500 70.7h1.400v13.200h2.400l-3.100 4.400-3.100-4.400h2.400z" fill="#a9b7d2"/>
<text x="725.00" y="104.00" font-size="11" fill="#a9b7d2" font-weight="bold" textLength="6.90" lengthAdjust="spacingAndGlyphs" stroke="#a9b7d2" stroke-width="0.5">Z</text>
<text x="725.00" y="113.60" font-size="11" fill="#a9b7d2" font-weight="bold" textLength="8.00" lengthAdjust="spacingAndGlyphs" stroke="#a9b7d2" stroke-width="0.5">A</text>
<path d="M737.500 96.1h1.400v13.200h2.400l-3.100 4.400-3.100-4.400h2.400z" fill="#a9b7d2"/>
<text x="725.00" y="129.20" font-size="11" fill="#a9b7d2" font-weight="bold" textLength="8.00" lengthAdjust="spacingAndGlyphs" stroke="#a9b7d2" stroke-width="0.5">A</text>
<text x="725.00" y="138.80" font-size="11" fill="#a9b7d2" font-weight="bold" textLength="6.90" lengthAdjust="spacingAndGlyphs" stroke="#a9b7d2" stroke-width="0.5">Z</text>
<rect x="-5.800" y="-2.800" width="11.600" height="5.600" rx="1.400" transform="translate(736.2 134.5) rotate(-40)" fill="#b8c4db"/>
<path d="M816.600 72.600H847a1.200 1.200 0 0 1 .9 2L836.500 87.400V90l-3.500 2.400V106a1 1 0 0 1-1.600.8L829 105V87.400L815.700 74.600a1.200 1.200 0 0 1 .9-2z" fill="#a4b3cd"/>
<path d="M818.500 76l11.800 11.400V104l2-1.600" fill="none" stroke="#e6ebf3" stroke-width="0.9"/>
<path d="M832.500 89.500C839 92.500 846 99 850.500 106.500M850.600 90C843.500 93 836.500 99.500 832 106" fill="none" stroke="#a4b3cd" stroke-width="3" stroke-linecap="round"/>
<rect x="867.100" y="74.200" width="34.800" height="29.800" fill="#e8f0fc"/>
<rect x="875.900" y="79.600" width="8.200" height="24.400" fill="#cdd8ea"/>
<rect x="867.100" y="74.200" width="34.800" height="5.600" fill="#a4b3cd"/>
<path d="M867.700 79V103.400H901.300V79M875.900 79.600V104M884.100 79.600V104M892.700 79.600V104M867.100 85.500H901.900M867.100 91.300H901.900M867.100 97.200H901.900" fill="none" stroke="#a4b3cd" stroke-width="1.200"/>
<path d="M887.500 85h5v15.600h3l-5.500 7.200-5.500-7.200h3z" fill="#f3f5f7" stroke="#f3f5f7" stroke-width="1.500"/>
<path d="M888 85.900h4v15.300h2.400l-4.400 5.800-4.400-5.800h2.400z" fill="#a4b3cd"/>
<path d="M889.400 87.300h1.200v15" fill="none" stroke="#e6ebf3" stroke-width="0.800"/>
<path d="M897.600 107V93.400h-2.600l4.500-6 4.500 6h-2.600V107z" fill="#a4b3cd" stroke="#f3f5f7" stroke-width="0.800"/>
<path d="M940 74.300h5v3.400h2V89h-2v12.100H933.300V89h2v-5.500h2.400v-5.800H940zM956 74.300h-5v3.400h-2V89h2v12.100h11.700V89h-2v-5.500h-2.400v-5.800H956z" fill="#808080"/>
<rect x="944.500" y="83.500" width="7" height="5.500" fill="#808080"/>
<rect x="946.800" y="85.400" width="2.400" height="2" fill="#e8e8e8"/>
<path d="M934.200 89.500v11M940.600 75v2.700M938.500 78.500v4.500M936.200 84.300v4M956.600 75v2.700M958.900 78.500v4.500M961.100 84.300v4M961.900 89.500v11" stroke="#d9d9d9" stroke-width="0.900"/>
<text x="987.6" y="87.3" style="font-family:'Liberation Serif',serif" font-size="25" fill="#4d4d4d" textLength="14.600" lengthAdjust="spacingAndGlyphs">Σ</text>
<rect x="989.900" y="95.800" width="11.400" height="16.600" fill="#e6edf9" stroke="#a9b7d2" stroke-width="1.100"/>
<path d="M993 100.300h6M993 104.300h6M993 108.300h6" stroke="#a9b7d2" stroke-width="1.700"/>
<path d="M989.900 94.300v7.200M986.300 97.900h7.200M987.400 95.400l5 5M992.400 95.400l-5 5" stroke="#b4c0d8" stroke-width="1.100"/>
<path d="M1089.800 97.700H1101L1098.600 101.400a1.800 1.800 0 0 1-1.500.9H1091a1.200 1.200 0 0 1-1.200-1.200zM1101.500 97.700H1112.800L1109.800 101.400a1.800 1.800 0 0 1-1.500.9H1102.700a1.200 1.200 0 0 1-1.200-1.200z" fill="#fff" stroke="#8c8c8c" stroke-width="1.200"/>
<rect x="1089.400" y="72.750" width="34.350" height="25" fill="#fff"/>
<rect x="1089.400" y="72.750" width="34.350" height="6.450" fill="#c5d5ea"/>
<rect x="1089.400" y="72.750" width="9" height="25" fill="#c5d5ea"/>
<path d="M1098.400 72.750V97.750M1107 72.750V97.750M1115.200 72.750V97.750M1089.400 79.200H1123.750M1089.400 85.250H1123.750M1089.400 91.300H1123.750" fill="none" stroke="#a6a6a6" stroke-width="1.200"/>
<rect x="1089.400" y="72.750" width="34.350" height="25" rx="0.800" fill="none" stroke="#8c8c8c" stroke-width="1.500"/>
<path d="M1152.700 84.700L1158.500 78.800M1152.700 91.300L1156.200 95.250" stroke="#8c8c8c" stroke-width="1.100"/>
<rect x="1138.4" y="81.3" width="14.300" height="14.200" rx="0.800" fill="#fff" stroke="#8c8c8c" stroke-width="1.200"/>
<path d="M1137.8000000000002 84.7V81.7a1 1 0 0 1 1-1H1152.3000000000002a1 1 0 0 1 1 1V84.7z" fill="#3f7bbf"/>
<path d="M1142.1000000000001 87.8h7M1142.1000000000001 91.39999999999999h7" stroke="#b5b5b5" stroke-width="1.100"/>
<rect x="1158.5" y="70.6" width="14.300" height="14.200" rx="0.800" fill="#fff" stroke="#8c8c8c" stroke-width="1.200"/>
<path d="M1157.9 74.0V71.0a1 1 0 0 1 1-1H1172.4a1 1 0 0 1 1 1V74.0z" fill="#3f7bbf"/>
<path d="M1162.2 77.1h7M1162.2 80.69999999999999h7" stroke="#b5b5b5" stroke-width="1.100"/>
<rect x="1156.2" y="90.7" width="14.300" height="14.200" rx="0.800" fill="#fff" stroke="#8c8c8c" stroke-width="1.200"/>
<path d="M1155.6000000000001 94.10000000000001V91.10000000000001a1 1 0 0 1 1-1H1170.1000000000001a1 1 0 0 1 1 1V94.10000000000001z" fill="#3f7bbf"/>
<path d="M1159.9 97.2h7M1159.9 100.8h7" stroke="#b5b5b5" stroke-width="1.100"/>
<path d="M1188.900 104.200V72.200H1221.400" fill="none" stroke="#666" stroke-width="1.200" stroke-dasharray="2.100 1.500"/>
<rect x="1194.250" y="77.400" width="26.350" height="26.400" rx="1.200" fill="#fff" stroke="#8c8c8c" stroke-width="1.500"/>
<path d="M1203 77.400V103.800M1211.400 77.400V103.800M1194.250 86.300H1220.600M1194.250 94.900H1220.600" fill="none" stroke="#8c8c8c" stroke-width="1.300"/>
<path d="M1188.500 104.200L1221.400 72.200" stroke="#8c8c8c" stroke-width="1.400"/>
<rect x="1242.800" y="74.200" width="34.200" height="29.600" fill="#fff"/>
<rect x="1243.400" y="97.800" width="17" height="5.500" fill="#c5d5ea"/>
<path d="M1251.400 79.600V103.800M1260 79.600V103.800M1268.600 79.600V103.800M1242.800 85.250H1277M1242.800 91.200H1277M1242.800 97.200H1277" fill="none" stroke="#c2c2c2" stroke-width="1.200"/>
<path d="M1243.400 79V103.200H1276.400V79" fill="none" stroke="#a6a6a6" stroke-width="1.200"/>
<rect x="1242.800" y="74.200" width="34.200" height="5.400" fill="#808080"/>
<text x="1258.600" y="100.400" style="font-family:'Liberation Serif',serif" font-style="italic" font-size="28" fill="#f4f4f4" stroke="#f4f4f4" stroke-width="1.300" textLength="20.600" lengthAdjust="spacingAndGlyphs">fx</text>
<text x="1258.600" y="100.400" style="font-family:'Liberation Serif',serif" font-style="italic" font-size="28" fill="#5a5a5a" textLength="20.600" lengthAdjust="spacingAndGlyphs">fx</text>
</svg>
</div>
</body></html>
